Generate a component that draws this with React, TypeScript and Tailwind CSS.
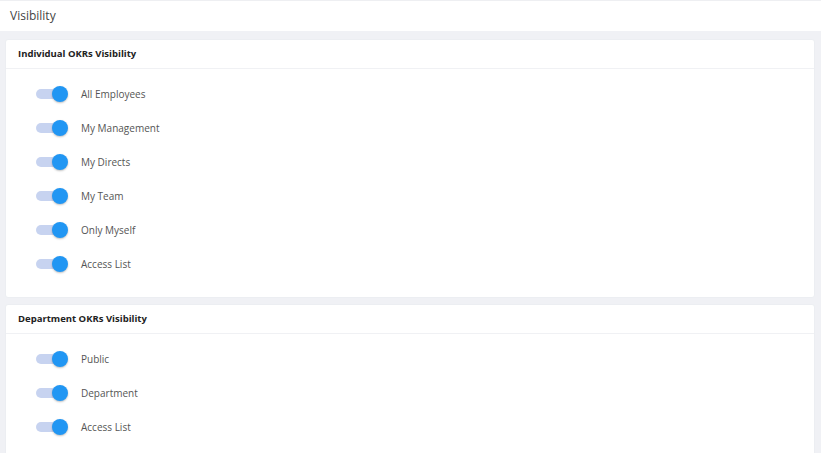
import React from 'react'

const individual = ['All Employees', 'My Management', 'My Directs', 'My Team', 'Only Myself', 'Access List']
const department = ['Public', 'Department', 'Access List']

function Toggle() {
  return (
    <span className="relative flex items-center w-[34px] h-[18px]">
      <span className="ml-[2px] w-[28px] h-[10px] rounded-full bg-[#c7d3f0]" />
      <span className="absolute right-0 top-[1px] w-[16px] h-[16px] rounded-full bg-[#2196f3] shadow-[0_1px_2px_rgba(0,0,0,0.25)]" />
    </span>
  )
}

function Card({ title, items }: { title: string; items: string[] }) {
  return (
    <div className="bg-white rounded-[3px] border border-[#eceef2]">
      <div className="h-[29px] flex items-center px-[12px] border-b border-[#f0f1f4] text-[9.5px] font-bold text-[#222]">
        {title}
      </div>
      <div className="pt-[8px] pb-[16px] flex flex-col">
        {items.map((it) => (
          <div key={it} className="h-[34px] flex items-center pl-[28px]">
            <Toggle />
            <span className="ml-[13px] text-[10px] text-[#555]">{it}</span>
          </div>
        ))}
      </div>
    </div>
  )
}

export default function App() {
  return (
    <div className="w-[821px] h-[453px] overflow-hidden bg-[#f0f1f5] font-['Open_Sans',sans-serif]">
      <div className="h-[31px] bg-white border-t border-[#eeeff2] flex items-center px-[10px] text-[12px] text-[#444]">
        Visibility
      </div>
      <div className="pl-[5px] pr-[6px] pt-[8px] flex flex-col gap-[6px]">
        <Card title="Individual OKRs Visibility" items={individual} />
        <Card title="Department OKRs Visibility" items={department} />
      </div>
    </div>
  )
}
